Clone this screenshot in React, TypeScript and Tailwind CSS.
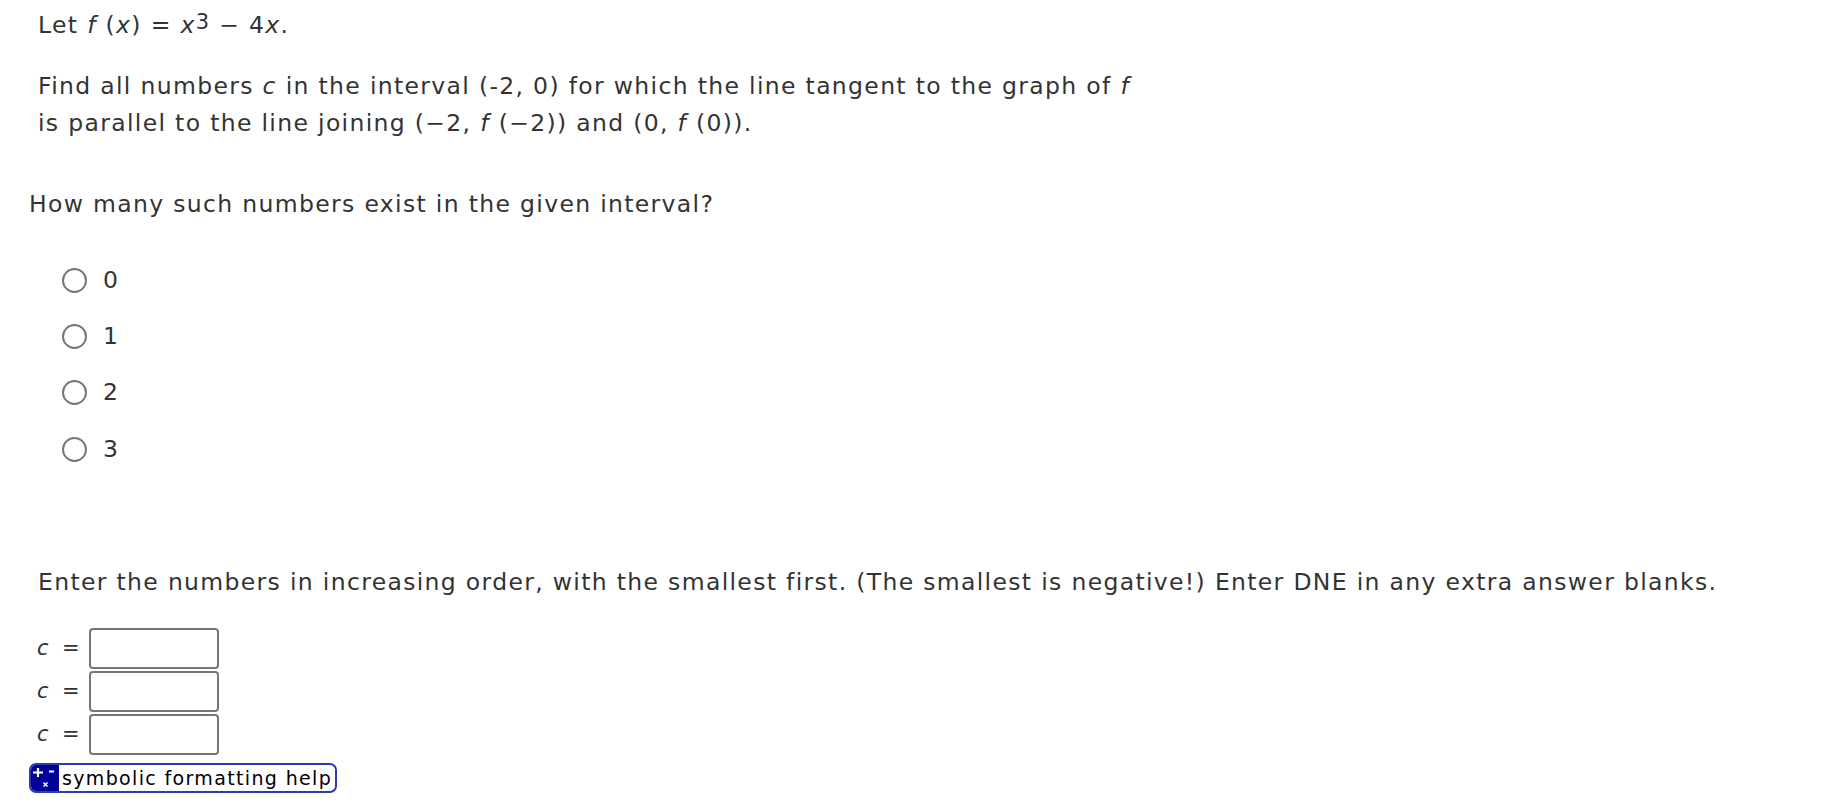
import React from "react";

function Radio({ label }: { label: string }) {
  return (
    <div className="flex items-center h-[56.3px]">
      <span className="block w-[25px] h-[25px] rounded-full border-2 border-[#767676] bg-white ml-[62px]" />
      <span className="ml-[16px]">{label}</span>
    </div>
  );
}

function AnswerRow() {
  return (
    <div className="flex items-center h-[43px]">
      <span className="w-[89px] pl-[37px] whitespace-nowrap flex items-center">
        <i className="w-[25px]">c</i>
        <span>=</span>
      </span>
      <div className="w-[130px] h-[41px] rounded-[4px] border-2 border-[#767676] bg-white" />
    </div>
  );
}

export default function App() {
  return (
    <div className="w-[1824px] h-[808px] bg-white text-[#333333] font-['DejaVu_Sans',sans-serif] text-[23.5px] leading-[37px] tracking-[1.33px] overflow-hidden">
      <div className="pt-[7px] pl-[38px]">
        Let <i>f</i>&nbsp;(<i>x</i>) = <i>x</i>
        <sup className="text-[21px] relative top-[-4px]">3</sup> − 4<i>x</i>.
      </div>
      <div className="mt-[24px] pl-[38px]">
        <div>
          Find all numbers <i>c</i> in the interval (-2, 0) for which the line tangent to the graph of <i>f</i>
        </div>
        <div>
          is parallel to the line joining (−2, <i>f</i>&nbsp;(−2)) and (0, <i>f</i>&nbsp;(0)).
        </div>
      </div>
      <div className="mt-[44px] pl-[29px]">How many such numbers exist in the given interval?</div>
      <div className="mt-[29px]">
        <Radio label="0" />
        <Radio label="1" />
        <Radio label="2" />
        <Radio label="3" />
      </div>
      <div className="mt-[87px] pl-[38px]">
        Enter the numbers in increasing order, with the smallest first. (The smallest is negative!) Enter DNE in any extra answer blanks.
      </div>
      <div className="mt-[26px] text-[21px] tracking-normal">
        <AnswerRow />
        <AnswerRow />
        <AnswerRow />
      </div>
      <div className="mt-[7px] ml-[29px] flex items-stretch w-[308px] h-[30px] rounded-[7px] border-2 border-[#2b3cb0] overflow-hidden bg-white tracking-normal">
        <div className="w-[28px] bg-[#000099] shrink-0 flex">
          <svg width="28" height="26" viewBox="0 0 28 26" className="block">
            <path d="M2 7.5H12M7 3V12" stroke="white" strokeWidth="2.2" fill="none" />
            <path d="M18 6.5H23" stroke="white" strokeWidth="2" fill="none" />
            <path d="M12.5 17.5L16.5 21.5M16.5 17.5L12.5 21.5" stroke="white" strokeWidth="1.4" fill="none" />
          </svg>
        </div>
        <span className="pl-[3px] text-black text-[19px] leading-[26px] font-['DejaVu_Sans',sans-serif] tracking-[1.35px] whitespace-nowrap">
          symbolic formatting help
        </span>
      </div>
    </div>
  );
}
